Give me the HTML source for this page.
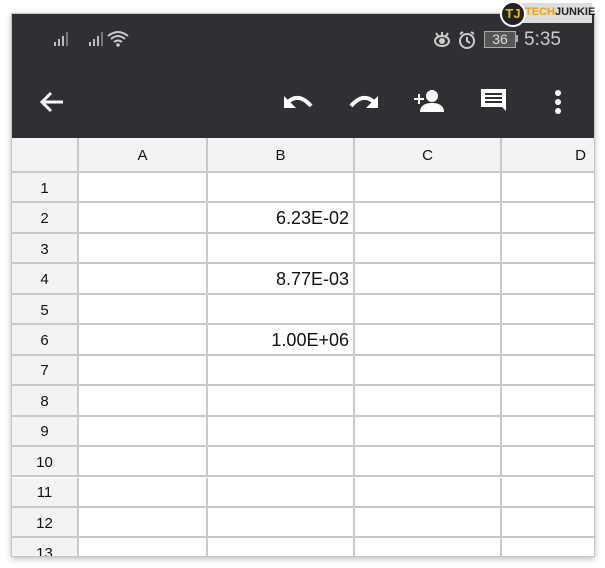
<!DOCTYPE html><html><head><style>
body{margin:0;width:605px;height:568px;background:#fff;position:relative;overflow:hidden;font-family:"Liberation Sans",Arial,sans-serif}
#f{position:absolute;left:11px;top:13px;width:582px;height:542px;border:1px solid #c4c4c4;box-shadow:0 2px 6px rgba(0,0,0,.25);overflow:hidden;background:#fff}
#bar{position:absolute;left:0;top:0;width:582px;height:124px;background:#2f3033}
.ic{position:absolute}
.cell{position:absolute;box-sizing:border-box;border-right:2px solid #c9c9c9;border-bottom:2px solid #c9c9c9;font-size:18px;color:#111;display:flex;align-items:center;padding-top:2px}
.h{background:#f3f3f3;justify-content:center;font-size:15px}
</style></head><body>
<div id="f">
<div id="bar">
<svg class="ic" style="left:40px;top:14px" width="90" height="22"><g fill="#bbb"><rect x="2" y="14" width="2" height="4"/><rect x="6" y="11" width="2" height="7"/><rect x="10" y="8" width="2" height="10"/><rect x="14" y="4" width="2" height="14" fill="#777"/><rect x="37" y="14" width="2" height="4"/><rect x="41" y="11" width="2" height="7"/><rect x="45" y="8" width="2" height="10"/><rect x="49" y="4" width="2" height="14" fill="#777"/></g>
<g fill="none" stroke="#ccc" stroke-width="2"><path d="M56 8 Q66 0 76 8"/><path d="M59 11 Q66 5 73 11"/><path d="M62 14 Q66 11 70 14"/></g><circle cx="66" cy="17" r="1.8" fill="#ccc"/></svg>
<svg class="ic" style="left:420px;top:16px" width="60" height="20" fill="none" stroke="#ccc" stroke-width="2"><ellipse cx="10" cy="11" rx="7" ry="5"/><circle cx="10" cy="11" r="2" fill="#ccc"/><path d="M4 3l2 3M10 2v3M16 3l-2 3"/><circle cx="35" cy="11" r="7"/><path d="M35 7v4l3 2M28 4l3-2M42 4l-3-2"/></svg>
<div class="ic" style="left:472px;top:17px;width:30px;height:15px;border:1px solid #aaa;background:#555;color:#ddd;font-size:14px;line-height:15px;text-align:center">36</div>
<div class="ic" style="left:504px;top:21px;width:2px;height:7px;background:#aaa"></div>
<div class="ic" style="left:512px;top:15px;color:#ccc;font-size:19px">5:35</div>
<svg class="ic" style="left:26px;top:76px" width="28" height="24" fill="none" stroke="#fff" stroke-width="3"><path d="M25 12H4M13 3l-9 9 9 9"/></svg>
<svg class="ic" style="left:270px;top:78px" width="34" height="22"><path d="M6 10 Q17 0 29 14" fill="none" stroke="#fff" stroke-width="4"/><path d="M2 4v12h12z" fill="#fff"/></svg>
<svg class="ic" style="left:334px;top:78px" width="34" height="22"><path d="M28 10 Q17 0 5 14" fill="none" stroke="#fff" stroke-width="4"/><path d="M32 4v12h-12z" fill="#fff"/></svg>
<svg class="ic" style="left:400px;top:74px" width="34" height="26" fill="#fff"><circle cx="20" cy="8" r="6"/><path d="M8 24c0-7 6-9 12-9s12 2 12 9z"/><path d="M2 10h4V6h2v4h4v2H8v4H6v-4H2z"/></svg>
<svg class="ic" style="left:467px;top:73px" width="30" height="30"><path d="M2 2h25v22l-4-4H2z" fill="#fff"/><path d="M6 7h17M6 11h17M6 15h17" stroke="#2f3033" stroke-width="2"/></svg>
<svg class="ic" style="left:540px;top:74px" width="12" height="30" fill="#fff"><circle cx="6" cy="5" r="3"/><circle cx="6" cy="14" r="3"/><circle cx="6" cy="23" r="3"/></svg>
</div>
<div id="g" style="position:absolute;left:0;top:124px"></div>
</div>
<div class="ic" style="left:508px;top:3px;width:84px;height:20px;background:#ddd;border-radius:0 0 0 6px"></div>
<div class="ic" style="left:500px;top:1px;width:22px;height:22px;border-radius:50%;background:#222;border:2px solid #fff;color:#f5b800;font-weight:bold;font-size:13px;text-align:center;line-height:22px">TJ</div>
<div class="ic" style="left:525px;top:6px;font-size:11px;font-weight:bold;color:#222"><span style="color:#f0a500">TECH</span>JUNKIE</div>
<script>
var g=document.getElementById('g'),cols=[0,67,196,343,490,590],hs=['','A','B','C','D'];
var vals={2:'6.23E-02',4:'8.77E-03',6:'1.00E+06'};
var h='';
for(var r=0;r<14;r++){var tp=r==0?0:35+(r-1)*30.45,ht=r==0?35:30.45;
for(var c=0;c<5;c++){var cls='cell',txt='',st='';
if(r==0||c==0){cls+=' h';txt=r==0?hs[c]:r;if(r==0&&c==4)st='justify-content:flex-end;padding-right:14px;';}
else if(c==2&&vals[r]){txt=vals[r];st='justify-content:flex-end;padding-right:4px;';}
h+='<div class="'+cls+'" style="'+st+'left:'+cols[c]+'px;top:'+tp+'px;width:'+(cols[c+1]-cols[c])+'px;height:'+ht+'px">'+txt+'</div>';}}
g.innerHTML=h;
</script>
</body></html>
